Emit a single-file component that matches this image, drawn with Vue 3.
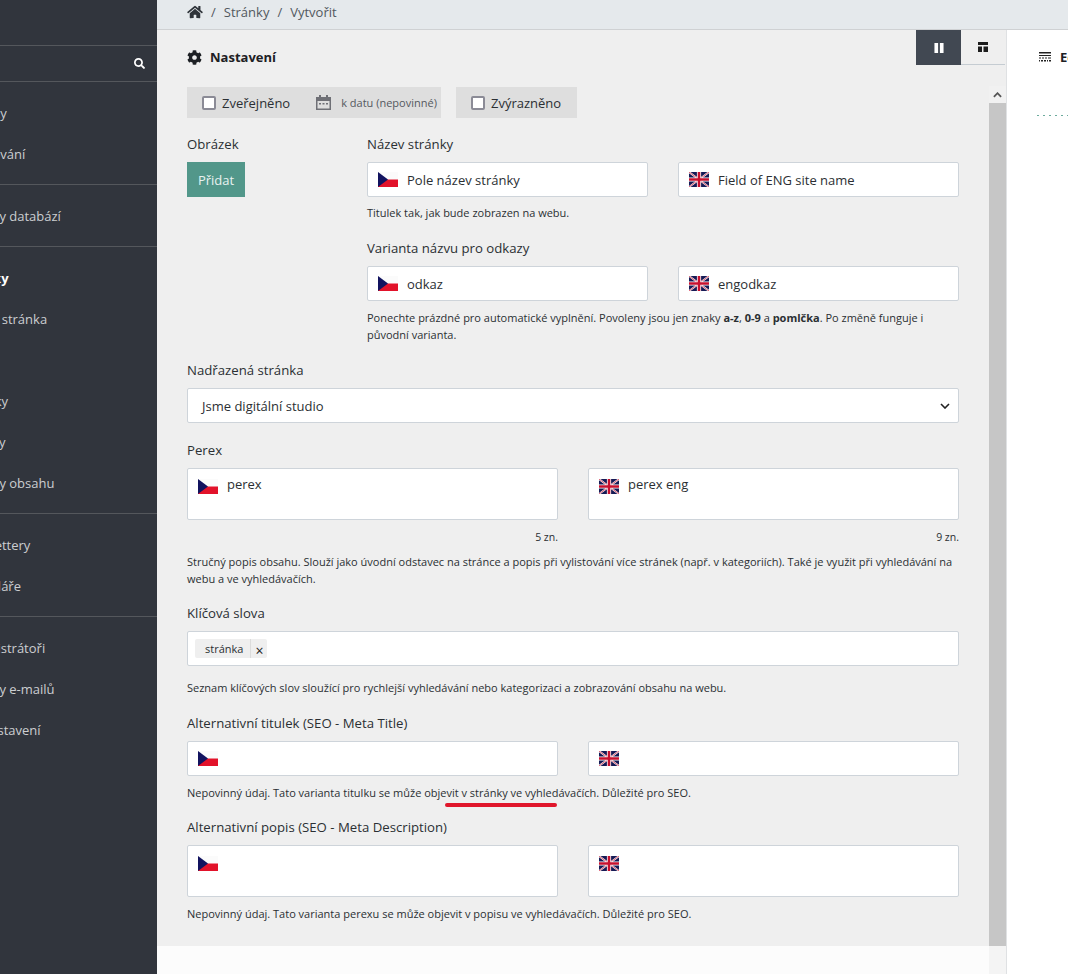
<script setup>
const sections = [
  { items: [{ t: 'Novinky' }, { t: 'Sdružování' }] },
  { items: [{ t: 'Šablony databází' }] },
  { items: [{ t: 'Stránky', strong: true }, { t: 'Vlastní stránka' }, { t: 'Bloky' }, { t: 'Odrážky' }, { t: 'Sloupky' }, { t: 'Šablony obsahu' }] },
  { items: [{ t: 'Newslettery' }, { t: 'Formuláře' }] },
  { items: [{ t: 'Administrátoři' }, { t: 'Šablony e-mailů' }, { t: 'Pro nastavení' }] }
]
</script>

<template>
  <div class="app">
    <aside class="sidebar">
      <div class="brand"></div>
      <div class="search">
        <svg class="search-icon" viewBox="0 0 512 512"><path fill="currentColor" d="M505 442.7L405.3 343c-4.5-4.5-10.6-7-17-7H372c27.6-35.3 44-79.7 44-128C416 93.1 322.9 0 208 0S0 93.1 0 208s93.1 208 208 208c48.3 0 92.7-16.4 128-44v16.3c0 6.4 2.5 12.5 7 17l99.7 99.7c9.4 9.4 24.6 9.4 33.9 0l28.3-28.3c9.4-9.4 9.4-24.6.1-34zM208 336c-70.7 0-128-57.2-128-128 0-70.7 57.2-128 128-128 70.7 0 128 57.2 128 128 0 70.7-57.2 128-128 128z"/></svg>
      </div>
      <nav>
        <div v-for="(s, i) in sections" :key="i" class="nav-section">
          <div v-for="it in s.items" :key="it.t" class="nav-item" :class="{ strong: it.strong }">{{ it.t }}</div>
        </div>
      </nav>
    </aside>

    <div class="main">
      <header class="topbar">
        <svg class="home" viewBox="0 0 576 512"><path fill="currentColor" d="M280.37 148.26L96 300.11V464a16 16 0 0 0 16 16l112.06-.29a16 16 0 0 0 15.92-16V368a16 16 0 0 1 16-16h64a16 16 0 0 1 16 16v95.64a16 16 0 0 0 16 16.05L464 480a16 16 0 0 0 16-16V300L295.67 148.26a12.19 12.19 0 0 0-15.3 0zM571.6 251.47L488 182.56V44.05a12 12 0 0 0-12-12h-56a12 12 0 0 0-12 12v72.61L318.47 43a48 48 0 0 0-61 0L4.34 251.47a12 12 0 0 0-1.6 16.9l25.5 31A12 12 0 0 0 45.15 301l235.22-193.74a12.19 12.19 0 0 1 15.3 0L530.9 301a12 12 0 0 0 16.9-1.6l25.5-31a12 12 0 0 0-1.7-16.93z"/></svg>
        <span class="sep">/</span><span>Stránky</span><span class="sep">/</span><span>Vytvořit</span>
      </header>

      <div class="content">
        <section class="panel">
          <div class="panel-head">
            <div class="title">
              <svg class="cog" viewBox="0 0 512 512"><path fill="currentColor" d="M487.4 315.7l-42.6-24.6c4.3-23.2 4.3-47 0-70.2l42.6-24.6c4.9-2.8 7.1-8.6 5.5-14-11.1-35.6-30-67.8-54.7-94.6-3.8-4.1-10-5.1-14.8-2.3L380.8 110c-17.9-15.4-38.5-27.3-60.8-35.1V25.8c0-5.6-3.9-10.5-9.4-11.7-36.7-8.2-74.3-7.8-109.2 0-5.5 1.2-9.4 6.1-9.4 11.7V75c-22.2 7.9-42.8 19.8-60.8 35.1L88.7 85.5c-4.9-2.8-11-1.9-14.8 2.3-24.7 26.7-43.6 58.9-54.7 94.6-1.7 5.4.6 11.2 5.5 14L67.3 221c-4.3 23.2-4.3 47 0 70.2l-42.6 24.6c-4.9 2.8-7.1 8.6-5.5 14 11.1 35.6 30 67.8 54.7 94.6 3.8 4.1 10 5.1 14.8 2.3l42.6-24.6c17.9 15.4 38.5 27.3 60.8 35.1v49.2c0 5.6 3.9 10.5 9.4 11.7 36.7 8.2 74.3 7.8 109.2 0 5.5-1.2 9.4-6.1 9.4-11.7v-49.2c22.2-7.9 42.8-19.8 60.8-35.1l42.6 24.6c4.9 2.8 11 1.9 14.8-2.3 24.7-26.7 43.6-58.9 54.7-94.6 1.5-5.5-.7-11.3-5.6-14.1zM256 336c-44.1 0-80-35.9-80-80s35.9-80 80-80 80 35.9 80 80-35.9 80-80 80z"/></svg>
              <span>Nastavení</span>
            </div>
            <div class="tabs">
              <div class="tab active">
                <svg viewBox="0 0 10 11" class="tab-icon"><path fill="#fff" d="M0 0h4v11H0zM6 0h4v11H6z"/></svg>
              </div>
              <div class="tab">
                <svg viewBox="0 0 10 10" class="tab-icon"><path fill="#1c1c1c" d="M0 0h10v3H0zM0 4.500h4v5.500H0zM5.500 4.500H10v5.500H5.500z"/></svg>
              </div>
            </div>
          </div>

          <div class="panel-body">
            <form class="form" @submit.prevent>
              <div class="toolbar">
                <div class="chip chip-wide">
                  <label class="check"><span class="box"></span><span>Zveřejněno</span></label>
                  <svg class="calendar" viewBox="0 0 15 15"><path fill="#6f7076" d="M3 0h2v2h5V0h2v2h3v13H0V2h3zM1.500 6v7.500h12V6z"/><path fill="#6f7076" d="M3 8h2v1.500H3zM6.500 8h2v1.500h-2zM10 8h2v1.500h-2z"/></svg>
                  <span class="date">k datu (nepovinné)</span>
                </div>
                <div class="chip chip-second">
                  <label class="check"><span class="box"></span><span>Zvýrazněno</span></label>
                </div>
              </div>

              <div class="top-grid">
                <div>
                  <div class="label">Obrázek</div>
                  <button class="add" type="button">Přidat</button>
                </div>
                <div>
                  <div class="label">Název stránky</div>
                  <div class="two">
                    <div class="field">
                      <svg class="flag" viewBox="0 0 20 15"><rect width="20" height="7.500" fill="#fbfbfb"/><rect y="7.500" width="20" height="7.500" fill="#e2122a"/><path fill="#12135f" d="M0 0l10 7.500L0 15z"/></svg>
                      <span>Pole název stránky</span>
                    </div>
                    <div class="field">
                      <svg class="flag" viewBox="0 0 20 15"><rect width="20" height="15" fill="#161a55"/><path stroke="#fff" stroke-width="1.800" d="M0 0l20 15M20 0L0 15"/><path stroke="#c8102e" stroke-width=".7" d="M0 0l20 15M20 0L0 15"/><path stroke="#fff" stroke-width="4.200" d="M10 0v15M0 7.500h20"/><path stroke="#c8102e" stroke-width="2.600" d="M10 0v15M0 7.500h20"/></svg>
                      <span>Field of ENG site name</span>
                    </div>
                  </div>
                  <p class="help first">Titulek tak, jak bude zobrazen na webu.</p>
                  <div class="label gap-17">Varianta názvu pro odkazy</div>
                  <div class="two">
                    <div class="field">
                      <svg class="flag" viewBox="0 0 20 15"><rect width="20" height="7.500" fill="#fbfbfb"/><rect y="7.500" width="20" height="7.500" fill="#e2122a"/><path fill="#12135f" d="M0 0l10 7.500L0 15z"/></svg>
                      <span>odkaz</span>
                    </div>
                    <div class="field">
                      <svg class="flag" viewBox="0 0 20 15"><rect width="20" height="15" fill="#161a55"/><path stroke="#fff" stroke-width="1.800" d="M0 0l20 15M20 0L0 15"/><path stroke="#c8102e" stroke-width=".7" d="M0 0l20 15M20 0L0 15"/><path stroke="#fff" stroke-width="4.200" d="M10 0v15M0 7.500h20"/><path stroke="#c8102e" stroke-width="2.600" d="M10 0v15M0 7.500h20"/></svg>
                      <span>engodkaz</span>
                    </div>
                  </div>
                  <p class="help">Ponechte prázdné pro automatické vyplnění. Povoleny jsou jen znaky <b>a-z</b>, <b>0-9</b> a <b>pomlčka</b>. Po změně funguje i původní varianta.</p>
                </div>
              </div>

              <div class="label gap-17">Nadřazená stránka</div>
              <div class="field select">
                <span>Jsme digitální studio</span>
                <svg class="chev" viewBox="0 0 10 6"><path d="M1 1l4 4 4-4" fill="none" stroke="#222" stroke-width="1.600"/></svg>
              </div>

              <div class="label gap-17">Perex</div>
              <div class="two wide">
                <div>
                  <div class="field area">
                    <svg class="flag" viewBox="0 0 20 15"><rect width="20" height="7.500" fill="#fbfbfb"/><rect y="7.500" width="20" height="7.500" fill="#e2122a"/><path fill="#12135f" d="M0 0l10 7.500L0 15z"/></svg>
                    <span>perex</span>
                  </div>
                  <div class="count">5 zn.</div>
                </div>
                <div>
                  <div class="field area">
                    <svg class="flag" viewBox="0 0 20 15"><rect width="20" height="15" fill="#161a55"/><path stroke="#fff" stroke-width="1.800" d="M0 0l20 15M20 0L0 15"/><path stroke="#c8102e" stroke-width=".7" d="M0 0l20 15M20 0L0 15"/><path stroke="#fff" stroke-width="4.200" d="M10 0v15M0 7.500h20"/><path stroke="#c8102e" stroke-width="2.600" d="M10 0v15M0 7.500h20"/></svg>
                    <span>perex eng</span>
                  </div>
                  <div class="count">9 zn.</div>
                </div>
              </div>
              <p class="help first">Stručný popis obsahu. Slouží jako úvodní odstavec na stránce a popis při vylistování více stránek (např. v kategoriích). Také je využit při vyhledávání na webu a ve vyhledávačích.</p>

              <div class="label gap-16">Klíčová slova</div>
              <div class="field tags">
                <span class="tag"><span class="tag-text">stránka</span><span class="tag-x">×</span></span>
              </div>
              <p class="help tight">Seznam klíčových slov sloužící pro rychlejší vyhledávání nebo kategorizaci a zobrazování obsahu na webu.</p>

              <div class="label gap-17">Alternativní titulek (SEO - Meta Title)</div>
              <div class="two wide">
                <div class="field">
                  <svg class="flag" viewBox="0 0 20 15"><rect width="20" height="7.500" fill="#fbfbfb"/><rect y="7.500" width="20" height="7.500" fill="#e2122a"/><path fill="#12135f" d="M0 0l10 7.500L0 15z"/></svg>
                </div>
                <div class="field">
                  <svg class="flag" viewBox="0 0 20 15"><rect width="20" height="15" fill="#161a55"/><path stroke="#fff" stroke-width="1.800" d="M0 0l20 15M20 0L0 15"/><path stroke="#c8102e" stroke-width=".7" d="M0 0l20 15M20 0L0 15"/><path stroke="#fff" stroke-width="4.200" d="M10 0v15M0 7.500h20"/><path stroke="#c8102e" stroke-width="2.600" d="M10 0v15M0 7.500h20"/></svg>
                </div>
              </div>
              <p class="help marked">Nepovinný údaj. Tato varianta titulku se může objevit v stránky ve vyhledávačích. Důležité pro SEO.<span class="redline"></span></p>

              <div class="label gap-16">Alternativní popis (SEO - Meta Description)</div>
              <div class="two wide">
                <div class="field area">
                  <svg class="flag" viewBox="0 0 20 15"><rect width="20" height="7.500" fill="#fbfbfb"/><rect y="7.500" width="20" height="7.500" fill="#e2122a"/><path fill="#12135f" d="M0 0l10 7.500L0 15z"/></svg>
                </div>
                <div class="field area">
                  <svg class="flag" viewBox="0 0 20 15"><rect width="20" height="15" fill="#161a55"/><path stroke="#fff" stroke-width="1.800" d="M0 0l20 15M20 0L0 15"/><path stroke="#c8102e" stroke-width=".7" d="M0 0l20 15M20 0L0 15"/><path stroke="#fff" stroke-width="4.200" d="M10 0v15M0 7.500h20"/><path stroke="#c8102e" stroke-width="2.600" d="M10 0v15M0 7.500h20"/></svg>
                </div>
              </div>
              <p class="help">Nepovinný údaj. Tato varianta perexu se může objevit v popisu ve vyhledávačích. Důležité pro SEO.</p>
            </form>

            <div class="scrollbar">
              <div class="scroll-btn">
                <svg viewBox="0 0 10 6" class="scroll-chev"><path d="M1 5l4-4 4 4" fill="none" stroke="#555" stroke-width="2"/></svg>
              </div>
              <div class="scroll-thumb"></div>
            </div>
          </div>
          <div class="fade"></div>
        </section>

        <aside class="right">
          <div class="right-title">
            <svg class="lines" viewBox="0 0 12 10"><path fill="#222" d="M0 0h12v1.500H0zM0 3h12v1H0z"/><path fill="#222" d="M0 5.500h2v1H0zM3 5.500h2v1H3zM6 5.500h2v1H6zM9 5.500h3v1H9zM0 8h1v1.500H0zM2 8h2v1.500H2zM5 8h2v1.500H5zM8 8h1v1.500H8zM10 8h2v1.500h-2z"/></svg>
            <b>Editor</b>
          </div>
          <div class="dotted"></div>
        </aside>
      </div>
    </div>
  </div>
</template>

<style>
html, body { margin: 0; background: #fff; }
</style>

<style scoped>
.app {
  display: flex;
  width: 1068px;
  height: 974px;
  overflow: hidden;
  font-family: "Open Sans", "Noto Sans", sans-serif;
  font-size: 13px;
  color: #2b2f33;
}
.sidebar {
  width: 157px;
  flex: none;
  background: #31353d;
  color: #ccced1;
  overflow: hidden;
}
.brand { height: 45px; border-bottom: 1px solid #54575c; }
.search {
  height: 35px;
  border-bottom: 1px solid #54575c;
  display: flex;
  align-items: center;
  justify-content: flex-end;
  padding-right: 12px;
  color: #fff;
}
.search-icon { width: 11px; height: 11px; }
.nav-section { padding: 11px 0 9px; border-bottom: 1px solid #54575c; }
.nav-section:last-child { border-bottom: 0; }
.nav-item {
  height: 41px;
  line-height: 41px;
  margin-left: -42px;
  white-space: nowrap;
}
.nav-item.strong { font-weight: 700; color: #fff; }

.main { flex: 1; min-width: 0; display: flex; flex-direction: column; }
.topbar {
  height: 30px;
  flex: none;
  box-sizing: border-box;
  background: #e5e9ec;
  border-bottom: 1px solid #cfd1d3;
  display: flex;
  align-items: center;
  padding: 0 0 5px 30px;
  color: #52585e;
}
.home { width: 16px; height: 14px; color: #2f343a; }
.sep { margin: 0 8px; }

.content { flex: 1; display: flex; min-height: 0; }
.panel {
  position: relative;
  width: 849px;
  flex: none;
  background: #efefef;
  display: flex;
  flex-direction: column;
}
.panel-head {
  height: 57px;
  flex: none;
  display: flex;
  justify-content: space-between;
  padding: 0 1px 0 30px;
}
.title {
  display: flex;
  align-items: center;
  gap: 8px;
  height: 54px;
  font-weight: 700;
  font-size: 13px;
  color: #1d2024;
}
.cog { width: 15px; height: 15px; }
.tabs { display: flex; height: 35px; }
.tab {
  width: 44px;
  display: flex;
  align-items: center;
  justify-content: center;
  box-sizing: border-box;
  border-bottom: 1px solid #c5ccd2;
}
.tab.active { width: 45px; background: #414852; border-bottom: 0; }
.tab-icon { width: 10px; height: 10px; }

.panel-body { flex: 1; display: flex; min-height: 0; }
.form { width: 772px; margin-left: 30px; flex: none; }
.toolbar { display: flex; gap: 15px; }
.chip {
  height: 31px;
  background: #dedede;
  display: flex;
  align-items: center;
  padding: 0 15px;
}
.chip-wide { width: 254px; box-sizing: border-box; }
.chip-second { padding-right: 16px; }
.check { display: flex; align-items: center; gap: 6px; }
.box {
  width: 10px;
  height: 10px;
  background: #fff;
  border: 2px solid #8b8b96;
  border-radius: 2px;
}
.calendar { width: 15px; height: 15px; margin-left: 26px; flex: none; }
.date { margin-left: 10px; font-size: 11px; white-space: nowrap; color: #55595e; }

.top-grid { display: grid; grid-template-columns: 180px 592px; margin-top: 16px; }
.label { height: 20px; line-height: 20px; margin-bottom: 8px; white-space: nowrap; font-size: 13.200px; }
.gap-16 { margin-top: 16px; }
.gap-17 { margin-top: 17px; }
.add {
  display: block;
  width: 58px;
  height: 35px;
  border: 0;
  padding: 0;
  background: #52978a;
  color: #e9f2f0;
  font: inherit;
}
.two { display: grid; grid-template-columns: 281px 281px; column-gap: 30px; }
.two.wide { grid-template-columns: 371px 371px; }
.field {
  height: 35px;
  box-sizing: border-box;
  background: #fff;
  border: 1px solid #ced4da;
  border-radius: 2px;
  display: flex;
  align-items: center;
  padding-left: 10px;
  white-space: nowrap;
}
.flag { width: 20px; height: 15px; margin-right: 9px; flex: none; }
.help {
  margin: 8px 0 0;
  font-size: 11px;
  line-height: 17px;
  color: #2b2f33;
}
.help b { font-weight: 700; }
.help.first { margin-top: 7px; }
.help.tight { margin-top: 13px; }
.select { justify-content: space-between; padding-right: 8px; padding-left: 14px; }
.chev { width: 10px; height: 6px; }
.area { height: 52px; align-items: flex-start; padding-top: 6px; }
.area .flag { margin-top: 4px; }
.count { margin-top: 9px; height: 17px; line-height: 17px; text-align: right; font-size: 10.500px; }
.tags { padding-left: 7px; }
.tag {
  display: flex;
  height: 19px;
  background: #efefef;
  border-radius: 2px;
  align-items: center;
  font-size: 11px;
}
.tag-text { padding: 0 7px 0 10px; border-right: 1px solid #dcdcdc; line-height: 19px; }
.tag-x { width: 16px; text-align: center; font-size: 14px; color: #222; line-height: 19px; padding-top: 2px; box-sizing: border-box; height: 19px; }
.help.marked { position: relative; }
.redline {
  position: absolute;
  left: 258px;
  top: 19px;
  width: 112px;
  height: 4px;
  border-radius: 2px;
  background: #e0162b;
}

.scrollbar { width: 17px; margin: -1px 0 0 30px; display: flex; flex-direction: column; flex: none; }
.scroll-btn { height: 17px; background: #f1f1f1; display: flex; align-items: center; justify-content: center; flex: none; }
.scroll-chev { width: 9px; height: 6px; }
.scroll-thumb { flex: 1; background: #c6c6c6; }
.fade {
  position: absolute;
  left: 0;
  right: 0;
  bottom: 0;
  height: 28px;
  background: rgba(255, 255, 255, .8);
}

.right { flex: 1; border-left: 1px solid #dfe1e3; overflow: hidden; padding-left: 32px; background: #fff; }
.right-title { display: flex; align-items: center; gap: 9px; height: 54px; white-space: nowrap; color: #1d2024; font-size: 13px; }
.lines { width: 12px; height: 10px; flex: none; }
.dotted {
  margin: 31px 0 0 -2px;
  height: 1px;
  background: repeating-linear-gradient(90deg, #6cab9d 0 2px, transparent 2px 6px);
}
</style>
